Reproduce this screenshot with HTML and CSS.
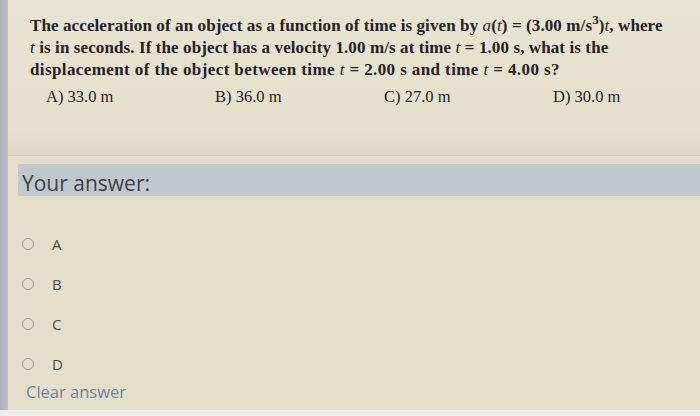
FILE: index.html
```html
<!DOCTYPE html>
<html>
<head>
<meta charset="utf-8">
<link rel="stylesheet" href="styles.css">
</head>
<body>
<div class="screen">
  <div class="edge"></div>
  <div class="main">
    <div class="question">
      <p class="qtext">The acceleration of an object as a function of time is given by <i class="it">a</i>(<i class="it">t</i>) = (3.00 m/s<sup>3</sup>)<i class="it">t</i>, where<br><i class="it">t</i> is in seconds. If the object has a velocity 1.00 m/s at time <i class="it">t</i> = 1.00 s, what is the<br><span class="wide">displacement of the object between time <i class="it">t</i> = 2.00 s and time <i class="it">t</i> = 4.00 s?</span></p>
      <div class="choices">
        <span class="choice">A) 33.0 m</span>
        <span class="choice">B) 36.0 m</span>
        <span class="choice">C) 27.0 m</span>
        <span class="choice">D) 30.0 m</span>
      </div>
    </div>
    <div class="band">Your answer:</div>
    <ul class="options">
      <li class="opt"><span class="radio"></span><span class="lab">A</span></li>
      <li class="opt"><span class="radio"></span><span class="lab">B</span></li>
      <li class="opt"><span class="radio"></span><span class="lab">C</span></li>
      <li class="opt"><span class="radio"></span><span class="lab">D</span></li>
    </ul>
    <div class="clear">Clear answer</div>
  </div>
</div>
<div class="bottom"></div>
</body>
</html>
```
FILE: styles.css
```css
html, body {
  margin: 0;
  padding: 0;
  width: 700px;
  height: 416px;
  overflow: hidden;
  background: #e3dfc9;
}
.screen {
  display: flex;
  height: 410px;
}
.edge {
  width: 8px;
  flex: none;
  background: linear-gradient(90deg, #a9adb8, #bfc0c0);
}
.main {
  flex: 1;
  display: flex;
  flex-direction: column;
}
.question {
  height: 156px;
  padding: 15px 0 0 22px;
  box-sizing: border-box;
  background: linear-gradient(180deg, #e7e4d1 0%, #e4e0cb 85%, #dcd8c6 100%);
  border-bottom: 1px solid #d0cebf;
}
.qtext {
  margin: 0;
  font-family: "Liberation Serif", "Times New Roman", serif;
  font-weight: bold;
  font-size: 17px;
  letter-spacing: 0.1px;
  line-height: 22px;
  color: #24222a;
}
.qtext .wide {
  letter-spacing: 0.4px;
}
.qtext sup {
  font-size: 13px;
  line-height: 0;
}
.it {
  font-weight: normal;
  font-style: italic;
}
.choices {
  display: flex;
  padding: 6px 0 0 16px;
  font-family: "Liberation Serif", "Times New Roman", serif;
  font-size: 16.5px;
  line-height: 20px;
  color: #24222a;
}
.choice {
  width: 169px;
}
.band {
  margin: 8px 0 0 10px;
  height: 32px;
  padding-left: 4px;
  background: #c1c8cd;
  font-family: "Open Sans", "DejaVu Sans", sans-serif;
  font-size: 21px;
  line-height: 38px;
  overflow: hidden;
  color: #3b404a;
}
.options {
  list-style: none;
  margin: 28px 0 0 0;
  padding: 0 0 0 14px;
}
.opt {
  display: flex;
  align-items: center;
  height: 40px;
  font-family: "Open Sans", "DejaVu Sans", sans-serif;
  font-size: 15px;
  color: #4a4c52;
}
.radio {
  width: 10px;
  height: 10px;
  border: 1.5px solid #9b9c98;
  border-radius: 50%;
  margin-right: 18px;
}
.lab {
  line-height: 20px;
}
.clear {
  margin: -4px 0 0 18px;
  font-family: "Open Sans", "DejaVu Sans", sans-serif;
  font-size: 16.5px;
  color: #6e82a2;
}
.bottom {
  height: 6px;
  background: #efede6;
}
```
